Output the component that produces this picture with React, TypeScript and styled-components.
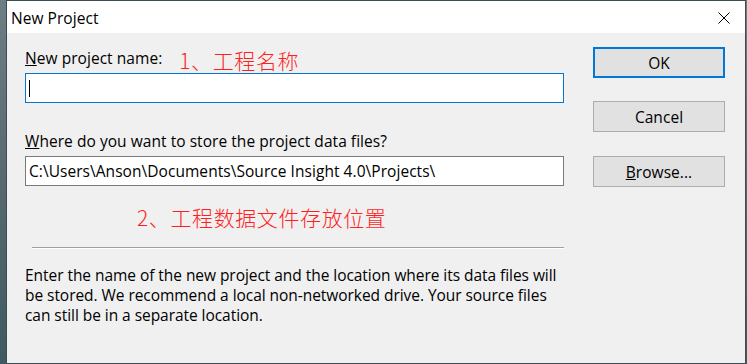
import React from "react";
import styled, { createGlobalStyle } from "styled-components";

const Global = createGlobalStyle`
  html, body { margin: 0; padding: 0; }
  body {
    width: 747px;
    height: 364px;
    overflow: hidden;
    background: linear-gradient(180deg, #6d7f84 0%, #56696f 50%, #3f5a61 100%);
    font-family: "Open Sans", "Noto Sans", sans-serif;
  }
`;

const Desktop = styled.div`
  display: flex;
  padding-left: 6px;
  height: 364px;
  box-sizing: border-box;
`;

const Window = styled.div`
  width: 740px;
  height: 364px;
  box-sizing: border-box;
  border: 1px solid #3a4d52;
  display: flex;
  flex-direction: column;
  background: #f0f0f0;
`;

const TitleBar = styled.div`
  height: 32px;
  background: #ffffff;
  display: flex;
  align-items: center;
  justify-content: space-between;
  padding: 0 15px 0 4px;
  flex-shrink: 0;
`;

const Title = styled.div`
  font-size: 15.5px;
  color: #000;
  letter-spacing: 0.05px;
  padding-top: 2px;
`;

const CloseIcon = styled.svg`
  width: 12px;
  height: 12px;
  display: block;
  margin-top: 2px;
`;

const Body = styled.div`
  display: flex;
  gap: 29px;
  padding: 14px 0 0 18px;
`;

const LeftCol = styled.div`
  width: 539px;
  display: flex;
  flex-direction: column;
`;

const RightCol = styled.div`
  width: 132px;
  display: flex;
  flex-direction: column;
`;

const LabelRow = styled.div<{ $h: number }>`
  height: ${(p) => p.$h}px;
  display: flex;
  align-items: flex-end;
  gap: 17px;
`;

const Label = styled.div`
  font-size: 15.5px;
  color: #000;
  line-height: 20px;
  letter-spacing: 0.05px;
  padding-bottom: 5px;
`;

const Note = styled.div<{ $indent?: number }>`
  font-family: "Noto Sans CJK SC", sans-serif;
  font-weight: 300;
  font-size: 21px;
  line-height: 26px;
  color: #ff1f1f;
  letter-spacing: 0.6px;
  padding-left: ${(p) => p.$indent ?? 0}px;
`;

const Field = styled.div<{ $focused?: boolean }>`
  height: 30px;
  box-sizing: border-box;
  border: 1px solid ${(p) => (p.$focused ? "#0078d7" : "#7a7a7a")};
  background: #fff;
  display: flex;
  align-items: center;
  padding-left: 3px;
  font-size: 15.5px;
  letter-spacing: 0.05px;
  color: #000;
`;

const Caret = styled.span`
  display: inline-block;
  width: 1px;
  height: 17px;
  background: #000;
`;

const NoteRow = styled.div`
  height: 60px;
  display: flex;
  align-items: center;
  padding-top: 1px;
`;

const Separator = styled.div`
  margin-left: 7px;
  height: 1px;
  background: #a0a0a0;
  border-bottom: 1px solid #ffffff;
`;

const Paragraph = styled.p`
  margin: 16px -30px 0 0;
  font-size: 15.5px;
  line-height: 20px;
  letter-spacing: -0.05px;
  white-space: nowrap;
  color: #000;
`;

const Button = styled.div<{ $default?: boolean; $mt: number }>`
  margin-top: ${(p) => p.$mt}px;
  height: 31px;
  box-sizing: border-box;
  background: #e1e1e1;
  border: ${(p) => (p.$default ? "2px solid #0078d7" : "1px solid #adadad")};
  display: flex;
  align-items: center;
  justify-content: center;
  font-size: 15.5px;
  letter-spacing: 0.05px;
  color: #000;
`;

export default function App() {
  return (
    <>
      <Global />
      <Desktop>
        <Window>
          <TitleBar>
            <Title>New Project</Title>
            <CloseIcon viewBox="0 0 12 12">
              <path d="M0.5 0.5 L11.5 11.5 M11.5 0.5 L0.5 11.5" stroke="#000" strokeWidth="1" fill="none" />
            </CloseIcon>
          </TitleBar>
          <Body>
            <LeftCol>
              <LabelRow $h={26}>
                <Label>
                  <u>N</u>ew project name:
                </Label>
                <Note>1、工程名称</Note>
              </LabelRow>
              <Field $focused>
                <Caret />
              </Field>
              <LabelRow $h={53}>
                <Label>
                  <u>W</u>here do you want to store the project data files?
                </Label>
              </LabelRow>
              <Field>C:\Users\Anson\Documents\Source Insight 4.0\Projects\</Field>
              <NoteRow>
                <Note $indent={112}>2、工程数据文件存放位置</Note>
              </NoteRow>
              <Separator />
              <Paragraph>
                Enter the name of the new project and the location where its data files will
                <br />
                be stored. We recommend a local non-networked drive. Your source files
                <br />
                can still be in a separate location.
              </Paragraph>
            </LeftCol>
            <RightCol>
              <Button $default $mt={0}>OK</Button>
              <Button $mt={23}>Cancel</Button>
              <Button $mt={24}>
                <span>
                  <u>B</u>rowse...
                </span>
              </Button>
            </RightCol>
          </Body>
        </Window>
      </Desktop>
    </>
  );
}
